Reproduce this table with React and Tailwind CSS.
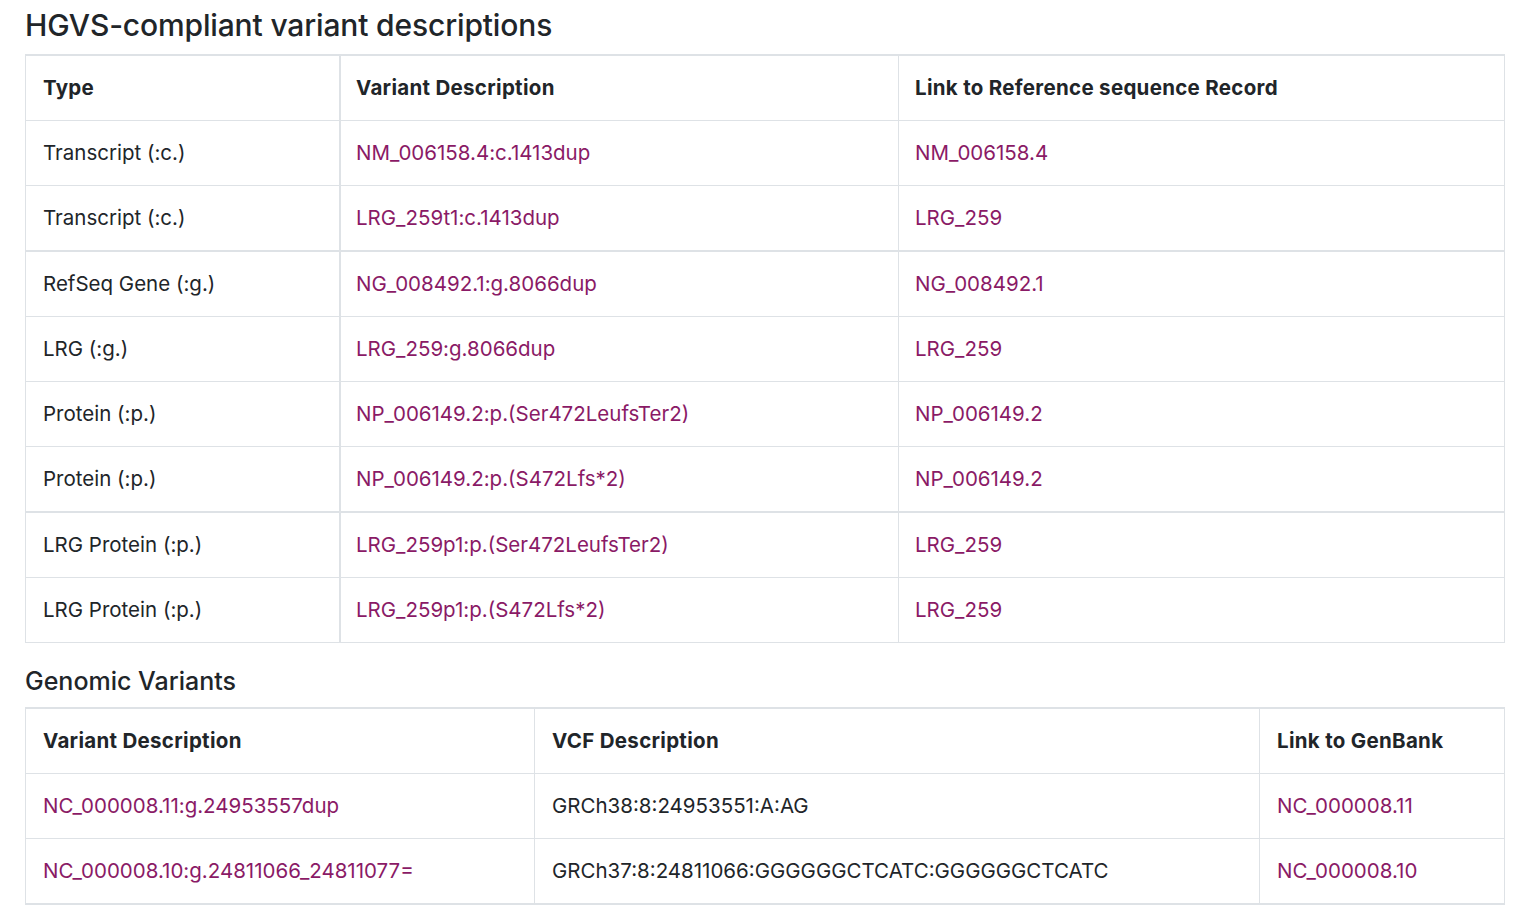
import React from 'react';

const LINK = 'text-[#8a1a66]';

const hgvsRows = [
    { type: 'Transcript (:c.)', desc: 'NM_006158.4:c.1413dup', ref: 'NM_006158.4' },
    { type: 'Transcript (:c.)', desc: 'LRG_259t1:c.1413dup', ref: 'LRG_259' },
    { type: 'RefSeq Gene (:g.)', desc: 'NG_008492.1:g.8066dup', ref: 'NG_008492.1', thick: true },
    { type: 'LRG (:g.)', desc: 'LRG_259:g.8066dup', ref: 'LRG_259' },
    { type: 'Protein (:p.)', desc: 'NP_006149.2:p.(Ser472LeufsTer2)', ref: 'NP_006149.2' },
    { type: 'Protein (:p.)', desc: 'NP_006149.2:p.(S472Lfs*2)', ref: 'NP_006149.2' },
    { type: 'LRG Protein (:p.)', desc: 'LRG_259p1:p.(Ser472LeufsTer2)', ref: 'LRG_259', thick: true },
    { type: 'LRG Protein (:p.)', desc: 'LRG_259p1:p.(S472Lfs*2)', ref: 'LRG_259' },
];

const genomicRows = [
    { desc: 'NC_000008.11:g.24953557dup', vcf: 'GRCh38:8:24953551:A:AG', link: 'NC_000008.11' },
    { desc: 'NC_000008.10:g.24811066_24811077=', vcf: 'GRCh37:8:24811066:GGGGGGCTCATC:GGGGGGCTCATC', link: 'NC_000008.10' },
];

const App = () => {
    return (
        <div
            className="min-h-screen bg-white px-[25px] text-[#212529]"
            style={{ fontFamily: 'Inter, "Noto Sans", sans-serif' }}
        >
            <h2 className="text-[30px] leading-[36px] pt-[7px] pb-[11px] font-medium tracking-[-0.15px]">
                HGVS-compliant variant descriptions
            </h2>

            {/* HGVS table */}
            <div className="w-[1480px] border-x border-b border-[#dee2e6] text-[20.5px]">
                <div className="grid grid-cols-[313px_559px_1fr] h-[66px] border-t-2 border-[#dee2e6] font-bold tracking-[0.3px]">
                    <div className="flex items-center pl-[17px]">Type</div>
                    <div className="flex items-center pl-[15px] border-l-2 border-[#dee2e6]">Variant Description</div>
                    <div className="flex items-center pl-[16px] border-l border-[#dee2e6]">Link to Reference sequence Record</div>
                </div>
                {hgvsRows.map((row, i) => (
                    <div
                        key={i}
                        className={`grid grid-cols-[313px_559px_1fr] border-[#dee2e6] ${
                            row.thick ? 'h-[66px] border-t-2' : 'h-[65px] border-t'
                        }`}
                    >
                        <div className="flex items-center pl-[17px]">{row.type}</div>
                        <div className={`flex items-center pl-[15px] border-l-2 border-[#dee2e6] ${LINK}`}>{row.desc}</div>
                        <div className={`flex items-center pl-[16px] border-l border-[#dee2e6] ${LINK}`}>{row.ref}</div>
                    </div>
                ))}
            </div>

            <h3 className="text-[25px] leading-[32px] mt-[22px] mb-[10px] font-medium">Genomic Variants</h3>

            {/* Genomic table */}
            <div className="w-[1480px] border-x border-y-2 border-[#dee2e6] text-[20.5px]">
                <div className="grid grid-cols-[508px_725px_1fr] h-[64px] font-bold tracking-[0.3px]">
                    <div className="flex items-center pl-[17px]">Variant Description</div>
                    <div className="flex items-center pl-[17px] border-l border-[#dee2e6]">VCF Description</div>
                    <div className="flex items-center pl-[17px] border-l border-[#dee2e6]">Link to GenBank</div>
                </div>
                {genomicRows.map((row, i) => (
                    <div key={i} className="grid grid-cols-[508px_725px_1fr] h-[65px] border-t border-[#dee2e6]">
                        <div className={`flex items-center pl-[17px] ${LINK}`}>{row.desc}</div>
                        <div className="flex items-center pl-[17px] border-l border-[#dee2e6]">{row.vcf}</div>
                        <div className={`flex items-center pl-[17px] border-l border-[#dee2e6] ${LINK}`}>{row.link}</div>
                    </div>
                ))}
            </div>
        </div>
    );
};

export default App;
